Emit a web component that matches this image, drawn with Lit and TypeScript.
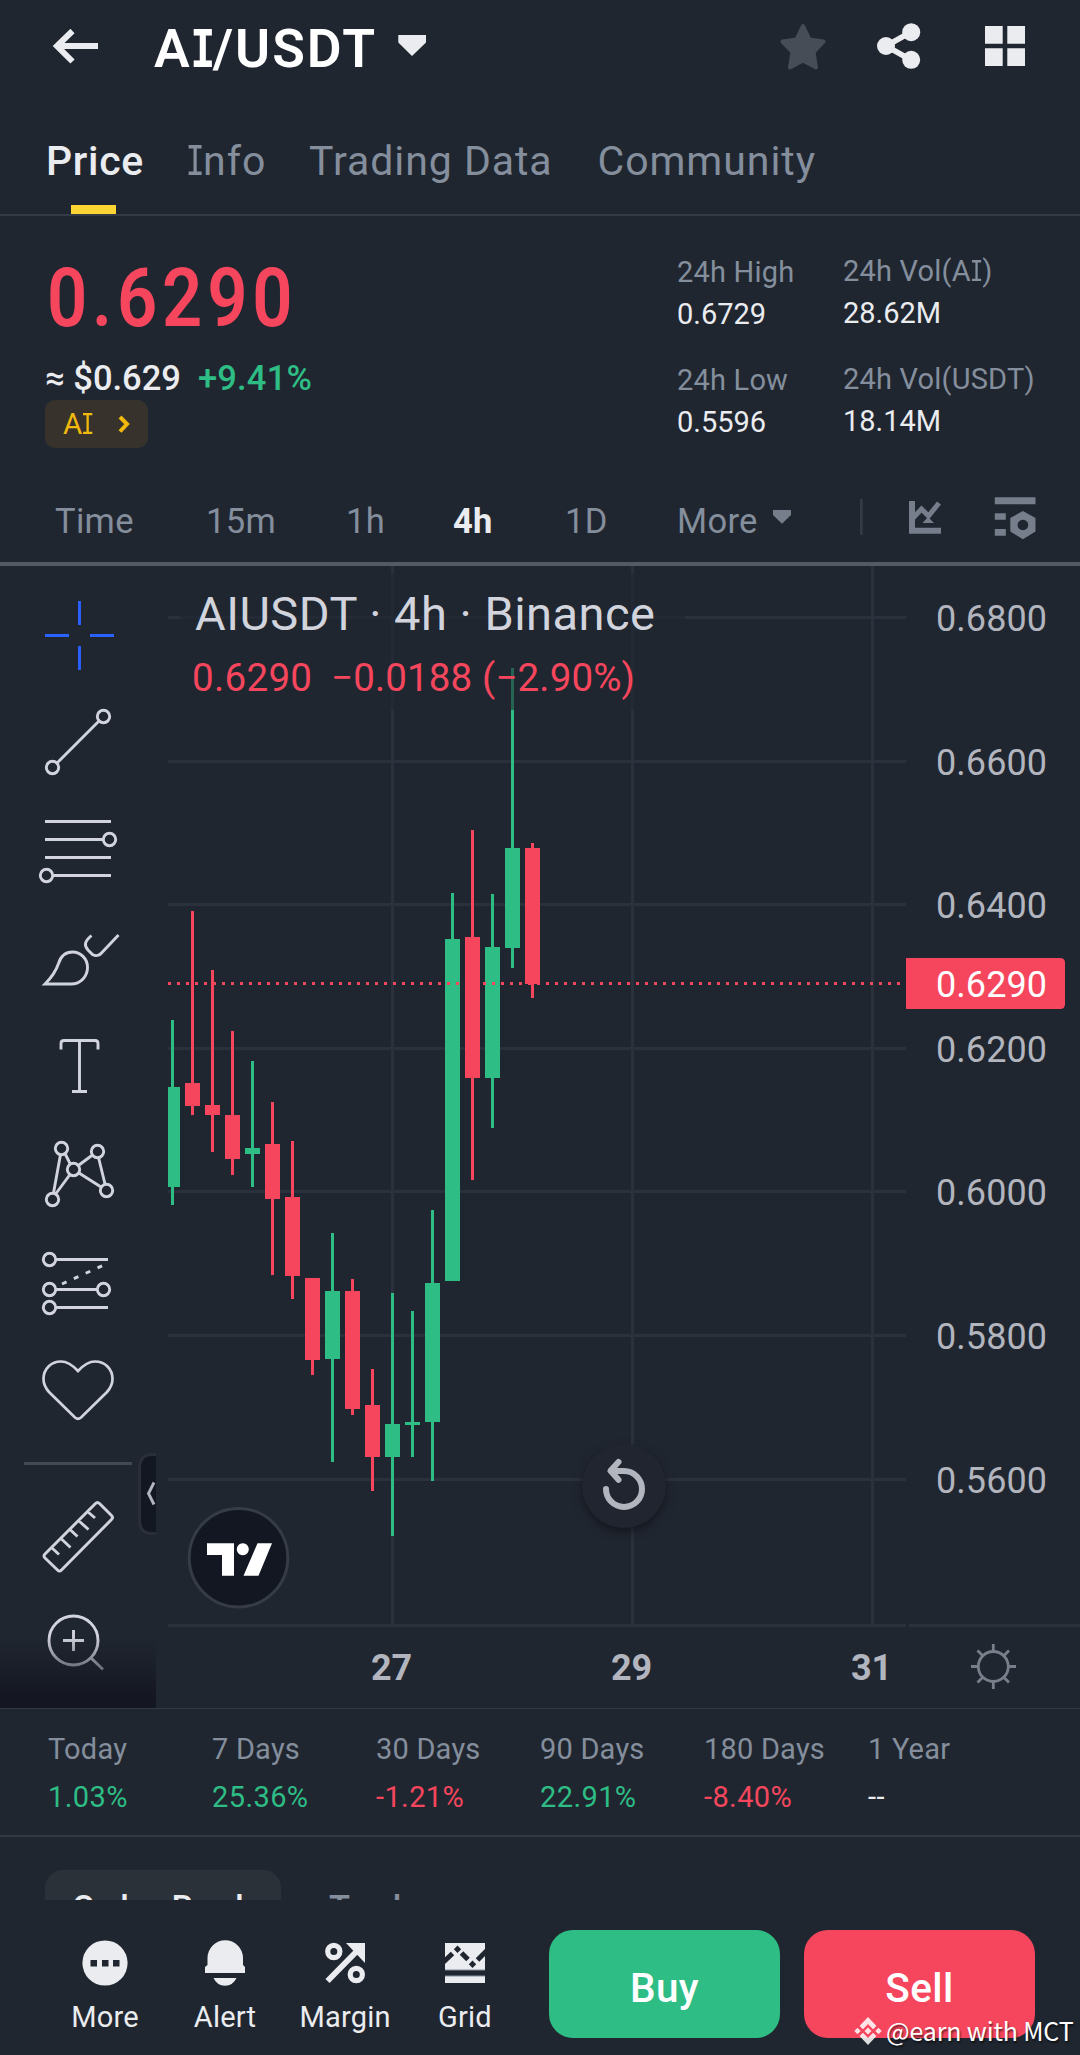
import { LitElement, html, svg, css, type SVGTemplateResult } from "lit";
import { customElement } from "lit/decorators.js";
import { classMap } from "lit/directives/class-map.js";

/** An SVG whose user units are page pixels: the viewBox names the region it covers. */
const region = (x: number, y: number, w: number, h: number, body: SVGTemplateResult, cls = "") =>
  html`<svg class="region ${cls}" width=${w} height=${h} viewBox="${x} ${y} ${w} ${h}">${body}</svg>`;

const slabI = html`<span class="slab">I</span>`;

// centre x, wick top, body top, body bottom, wick bottom, rising
type Candle = [number, number, number, number, number, boolean];
const candles: Candle[] = [
  [172.5, 1020, 1087, 1187, 1205, true],
  [192.5, 911, 1083, 1106, 1115, false],
  [212.5, 970, 1105, 1115, 1152, false],
  [232.5, 1031, 1115, 1159, 1175, false],
  [252.5, 1061, 1148, 1154, 1187, true],
  [272.5, 1102, 1144, 1199, 1275, false],
  [292.5, 1141, 1197, 1276, 1299, false],
  [312.5, 1278, 1278, 1360, 1375, false],
  [332.5, 1233, 1291, 1359, 1462, true],
  [352.5, 1279, 1291, 1409, 1415, false],
  [372.5, 1369, 1405, 1457, 1491, false],
  [392.5, 1293, 1424, 1457, 1536, true],
  [412.5, 1311, 1422, 1425, 1457, true],
  [432.5, 1210, 1283, 1422, 1481, true],
  [452.5, 893, 939, 1281, 1281, true],
  [472.5, 830, 937, 1078, 1180, false],
  [492.5, 894, 947, 1078, 1128, true],
  [512.5, 668, 848, 948, 968, true],
  [532.5, 843, 848, 984, 998, false],
];

const levels: [string, number][] = [
  ["0.6800", 616], ["0.6600", 760], ["0.6400", 903], ["0.6200", 1047],
  ["0.6000", 1190], ["0.5800", 1334], ["0.5600", 1478],
];
const dates: [string, number][] = [["27", 391], ["29", 631], ["31", 871]];

const tools: SVGTemplateResult[] = [
  svg`<path stroke="#2962ff" d="M79.5 601v24M79.5 646v24M45 635.5h24M90 635.5h24"/>`,
  svg`<circle cx="103.5" cy="716.5" r="6.2"/><circle cx="52.5" cy="767.5" r="6.2"/><path d="M57 763L99 721"/>`,
  svg`<path d="M45 821.5h66M45 839.5h58M45 857.5h66M53 875.5h58"/><circle cx="109.5" cy="839.5" r="6.2"/><circle cx="46.5" cy="875.5" r="6.2"/>`,
  svg`<path d="M45 984H71C81 984 87.500 976 87.500 967.500C87.500 958.500 80.500 952 72.500 952C65 952 60.500 957 58.500 963.500C56 971 50 979 45 984Z"/><path d="M91.500 935.500C85 941 83.500 945 88 950L92.500 954.500C96 956.500 99.500 955.500 101.500 953L118.500 935"/>`,
  svg`<path d="M61 1049.500v-6q0-3 3-3h31q3 0 3 3v6M79.500 1041v50.500M72 1091.500h15"/>`,
  svg`<path d="M60.500 1154.500L53.500 1193M65 1153.500L70 1163.500M79 1165L92.500 1155M98.500 1157.500L105 1184M79 1173L101 1187M70 1174.500L56 1193.500"/><circle cx="61.500" cy="1148.500" r="6.200"/><circle cx="97.500" cy="1151.500" r="6.200"/><circle cx="73.500" cy="1169.500" r="6.200"/><circle cx="106.500" cy="1190.500" r="6.200"/><circle cx="52.500" cy="1199.500" r="6.200"/>`,
  svg`<path d="M56 1259.500h52M56 1289.500h41M56 1307.500h52"/><path stroke-dasharray="5 8" d="M62 1284L104 1265"/><circle cx="49.500" cy="1259.500" r="6.200"/><circle cx="49.500" cy="1289.500" r="6.200"/><circle cx="103.500" cy="1289.500" r="6.200"/><circle cx="49.500" cy="1307.500" r="6.200"/>`,
  svg`<path stroke-width="2.700" d="M78 1371C72 1364.500 67 1361.500 61 1361.500C51 1361.500 43.500 1369 43.500 1379C43.500 1384 45.500 1388 49 1392L75 1417.500Q78 1420 81 1417.500L107 1392C110.500 1388 112.500 1384 112.500 1379C112.500 1369 105 1361.500 95 1361.500C89 1361.500 84 1364.500 78 1371Z"/>`,
];

const performance: [string, string, string][] = [
  ["Today", "1.03%", "up"], ["7 Days", "25.36%", "up"], ["30 Days", "-1.21%", "down"],
  ["90 Days", "22.91%", "up"], ["180 Days", "-8.40%", "down"], ["1 Year", "--", ""],
];

const navItems: [string, SVGTemplateResult][] = [
  ["More", svg`<circle cx="105" cy="1963" r="22.600" fill="#eaecef"/><path fill="#202630" d="M90.500 1960h6.500v6.500h-6.500zM102 1960h6.500v6.500h-6.500zM113 1960h6.500v6.500h-6.500z"/>`],
  ["Alert", svg`<path fill="#eaecef" d="M207.500 1958a17.500 17.500 0 0 1 35.500 0v7l2 2v6h-40v-6l2.500-2zM213.500 1978h23q-3.500 7.700-11.500 7.700t-11.500-7.700z"/>`],
  ["Margin", svg`<g fill="none" stroke="#eaecef"><circle cx="333.800" cy="1951.500" r="6.100" stroke-width="5.200"/><circle cx="356.300" cy="1974.500" r="6.100" stroke-width="5.200"/><path stroke-width="5.800" d="M327.500 1981L358 1950"/></g><path fill="#eaecef" d="M346 1943h19v20z"/>`],
  ["Grid", svg`<path fill="#eaecef" d="M445 1943h40v27h-40zM445 1976h40v7h-40z"/><path stroke="#202630" stroke-width="5" d="M443 1962.500L452.500 1953.500M461.500 1953L468 1959.500M477.500 1960L487 1950.500"/><path fill="#202630" d="M457.500 1945.500l3.700 3.700-3.700 3.700-3.700-3.700zM472.500 1960.500l3.700 3.700-3.700 3.700-3.700-3.700z"/><path fill="#848e9c" d="M445 1969.500h40v1h-40zM445 1975.500h40v1h-40z"/>`],
];

@customElement("app-root")
export class AppRoot extends LitElement {
  static styles = css`
    :host {
      display: block;
      position: relative;
      width: 1080px;
      height: 2055px;
      overflow: hidden;
      background: #202630;
      color: #eaecef;
      font-family: Roboto, "Liberation Sans", sans-serif;
      white-space: nowrap;
    }
    .region { display: block; flex: none; }
    .slab {
      display: inline-block;
      font-family: "DejaVu Sans Mono", monospace;
      font-size: 0.975em;
      line-height: 1;
      letter-spacing: 0;
      transform: scaleX(0.8);
      margin: 0 -0.1em;
    }
    .up { color: #2ebd85; }
    .down { color: #f6465d; }

    .header { display: flex; height: 92px; padding-right: 45px; }
    .title { width: 244px; margin: 0; font-size: 53.5px; line-height: 97px; font-weight: 600; color: #fff; letter-spacing: 2px; }
    .spacer { flex: 1; }
    .actions { display: flex; }

    .tabs {
      display: grid;
      grid-template-columns: 141px 122px 288.5px auto;
      grid-template-rows: 122px;
      height: 122px;
      padding-left: 46px;
      border-bottom: 2px solid #333a46;
      font-size: 41px;
      font-weight: 450;
      line-height: 138px;
      letter-spacing: 0.95px;
      color: #848e9c;
    }
    .tab { position: relative; height: 122px; }
    .tab.active { color: #eaecef; font-weight: 500; letter-spacing: 0.7px; }
    .tab.active::after { content: ""; position: absolute; left: 25px; bottom: 0; width: 45px; height: 9px; background: #fcd535; }

    .ticker { display: flex; height: 253px; }
    .quote { width: 632px; padding: 50px 0 0 45px; }
    .last { width: 290px; margin-left: 2px; font-size: 82px; line-height: 64px; font-weight: 600; letter-spacing: 5.6px; transform: scaleX(0.86); transform-origin: left; }
    .fiat { display: flex; gap: 17px; margin-top: 27px; font-size: 34.5px; line-height: 42px; font-weight: 500; }
    .fiat .up { letter-spacing: 0.2px; }
    .tag { display: flex; width: 103px; height: 48px; margin-top: 1px; border-radius: 10px; background: #37332c; color: #f0b90b; font-size: 29.5px; line-height: 49px; }
    .tag-name { width: 67px; padding-left: 18px; box-sizing: border-box; }
    .stats { display: grid; grid-template-columns: 166px auto; }
    .stat-col { padding-top: 35px; display: flex; flex-direction: column; gap: 24px; }
    .stat-col + .stat-col { padding-top: 34px; }
    .label { font-size: 29px; line-height: 42px; letter-spacing: 0.2px; color: #848e9c; }
    .value { font-size: 29px; line-height: 42px; font-weight: 450; }

    .intervals {
      display: grid;
      grid-template-columns: 151px 140px 107px 112px 112px 88px 75px 45px 80px auto;
      height: 93px;
      padding-left: 55px;
      border-bottom: 4px solid #545962;
      font-size: 34.5px;
      line-height: 104px;
      letter-spacing: 0.3px;
      color: #848e9c;
    }
    .interval.active { color: #eaecef; font-weight: 700; }

    .chart { display: flex; height: 1142px; border-bottom: 1px solid #333a46; }
    .toolbar { position: relative; width: 156px; padding-top: 15px; box-sizing: border-box; overflow: hidden; }
    .tool { fill: none; stroke: #d1d4dc; stroke-width: 2.9; }
    .fade { position: absolute; inset: auto 0 0 0; height: 72px; background: linear-gradient(rgba(19, 23, 34, 0), #141722 85%); }
    .legend { font-size: 47px; fill: #d1d4dc; }
    .change { font-size: 38.5px; fill: #f6465d; }
    .axis { font-size: 36px; fill: #b2b5be; }
    .on-tag { fill: #fff; }
    .date { font-weight: 700; text-anchor: middle; }
    .shade { filter: drop-shadow(0 4px 5px rgba(10, 12, 18, 0.6)); }

    .performance { display: grid; grid-template-columns: repeat(6, 164px); height: 107px; padding: 19px 0 0 48px; border-bottom: 2px solid #333a46; }
    .performance .value { margin-top: 6px; font-weight: 400; letter-spacing: 0.4px; }

    .book { display: flex; height: 30px; padding: 33px 0 0 45px; overflow: hidden; font-size: 34.5px; line-height: 76px; font-weight: 500; letter-spacing: 0.9px; color: #848e9c; }
    .book-tab { width: 236px; height: 60px; margin-right: 48px; border-radius: 18px 18px 0 0; text-align: center; background: #2b3139; color: #eaecef; }

    .footer { display: flex; height: 155px; padding: 30px 0 0 45px; box-sizing: border-box; }
    .nav { width: 120px; text-align: center; }
    .nav .label { color: #eaecef; }
    .trade { width: 231px; height: 108px; margin-left: 24px; border-radius: 24px; text-align: center; color: #fff; font-size: 40.5px; line-height: 117px; font-weight: 500; letter-spacing: 0.4px; }
    .buy { background: #2ebd85; }
    .sell { background: #f6465d; }

    .mark { position: absolute; left: 852px; top: 2009.5px; display: flex; font: 400 25px/40px "Noto Sans CJK SC", sans-serif; letter-spacing: -0.15px; color: #fff; text-shadow: 1px 2px 2px rgba(0, 0, 0, 0.6); }
  `;

  private header() {
    return html`
      <header class="header">
        ${region(0, 0, 154, 92, svg`<path fill="none" stroke="#eaecef" stroke-width="6" d="M98 46H57M72.500 31L57 46L72.500 61.500"/>`)}
        <h1 class="title">A${slabI}/USDT</h1>
        ${region(398, 0, 40, 92, svg`<path fill="#eaecef" d="M398.300 35h27.700v7.500L412 56L398.300 42.500z"/>`)}
        <span class="spacer"></span>
        <div class="actions">
          ${region(770, 0, 95, 92, svg`<path fill="#474d57" stroke="#474d57" stroke-width="4" stroke-linejoin="round" d="M803 26L809.500 39.500L823.500 41.500L813.500 52L816 67.500L803 60.500L790 67.500L792.500 52L782.500 41.500L796.500 39.500Z"/>`)}
          ${region(865, 0, 95, 92, svg`<g fill="#eaecef"><circle cx="886" cy="46" r="9"/><circle cx="911.200" cy="32.200" r="9"/><circle cx="911.200" cy="59.800" r="9"/></g><path fill="none" stroke="#eaecef" stroke-width="5.500" d="M911 32L886 46L911 60"/>`)}
          ${region(960, 0, 75, 92, svg`<path fill="#eaecef" d="M985 26h17.700v17.700H985zM1007.300 26H1025v17.700h-17.700zM985 48.300h17.700V66H985zM1007.300 48.300H1025V66h-17.700z"/>`)}
        </div>
      </header>
      <nav class="tabs">
        <span class="tab active">Price</span><span class="tab">${slabI}nfo</span>
        <span class="tab">Trading Data</span><span class="tab">Community</span>
      </nav>`;
  }

  private stat(label: unknown, value: string) {
    return html`<div><div class="label">${label}</div><div class="value">${value}</div></div>`;
  }

  private ticker() {
    return html`
      <section class="ticker">
        <div class="quote">
          <div class="last down">0.6290</div>
          <div class="fiat"><span>≈ $0.629</span><span class="up">+9.41%</span></div>
          <div class="tag">
            <span class="tag-name">A${slabI}</span>
            ${region(112, 400, 36, 48, svg`<path fill="none" stroke="#f0b90b" stroke-width="4" d="M120 417l7 7-7 7.500"/>`)}
          </div>
        </div>
        <div class="stats">
          <div class="stat-col">${this.stat("24h High", "0.6729")}${this.stat("24h Low", "0.5596")}</div>
          <div class="stat-col">${this.stat(html`24h Vol(A${slabI})`, "28.62M")}${this.stat("24h Vol(USDT)", "18.14M")}</div>
        </div>
      </section>
      <div class="intervals">
        ${["Time", "15m", "1h", "4h", "1D", "More"].map(
          (t) => html`<span class=${classMap({ interval: true, active: t === "4h" })}>${t}</span>`,
        )}
        ${region(765, 469, 75, 93, svg`<path fill="#767e8b" d="M773 510h18v5l-9 8.700l-9-8.700z"/>`)}
        ${region(840, 469, 45, 93, svg`<path fill="#333b47" d="M860 499h2.700v36H860z"/>`)}
        ${region(885, 469, 80, 93, svg`<g fill="none" stroke="#767e8b"><path stroke-width="6" d="M912 501v29.800h29"/><path stroke-width="5" d="M913 518L921.500 509L928.500 516L939 503"/></g><path fill="#767e8b" d="M922.500 523l5.500-6 6 6z"/>`)}
        ${region(965, 469, 115, 93, svg`<path fill="#767e8b" fill-rule="evenodd" d="M994.800 497.300h40.700v7h-40.700zM994.800 513.300h11v6.500h-11zM994.800 529h11v6.700h-11zM1022.900 511l12.600 7v13.500l-12.600 7.800l-12.600-7.800V518zM1022.900 519.700a5.300 5.300 0 1 0 .01 0z"/>`)}
      </div>`;
  }

  private toolbar() {
    return html`
      <div class="toolbar">
        ${tools.map((t, i) => region(0, 581 + i * 108, 156, 108, t, "tool"))}
        ${region(0, 1445, 156, 263, svg`
          <path stroke="#434852" d="M24 1463.500h108"/>
          <path fill="#131722" stroke="#2a2e39" d="M160 1454.500h-8q-12.500 0-12.500 14v51q0 14 12.500 14h8z"/>
          <path stroke="#b2b5be" d="M154 1482.500l-5.500 11 5.500 11"/>
          <path d="M95.500 1503.500q2-2 4 0l12 12q2 2 0 4L61.500 1570q-2 2-4 0l-12.500-12q-2-2 0-4zM52 1548l7 6.500M61.500 1539l9 8.500M70.500 1530l7 6.500M79 1521l9.500 8.500M88 1512l7 6"/>
          <circle cx="73.500" cy="1640.500" r="24.500"/><path d="M63 1640.500h21M73.500 1630v21M91 1658l12 11.500"/>`, "tool")}
        <div class="fade"></div>
      </div>`;
  }

  private plot() {
    return region(156, 566, 924, 1142, svg`
      <clipPath id="pane"><rect x="168" y="566" width="738" height="1058"/></clipPath>
      <g fill="#2b313c">
        ${dates.map(([, x]) => svg`<rect x=${x} y="566" width="3" height="1058"/>`)}
        ${levels.map(([, y]) => svg`<rect x="168" y=${y} width="738" height="3"/>`)}
        <rect x="168" y="1624" width="738" height="3"/><rect x="909" y="1624" width="171" height="3"/>
      </g>
      <g clip-path="url(#pane)">
        ${candles.map(([x, t, bt, bb, b, rising]) => svg`<path fill=${rising ? "#2ebd85" : "#f6465d"}
          d="M${x - 1.5} ${t}h3V${b}h-3zM${x - 7.5} ${bt}h15V${bb}h-15z"/>`)}
      </g>
      <path stroke="#f6465d" stroke-width="3" stroke-dasharray="3 6" d="M168 983.500H906"/>
      <rect x="180" y="574" width="505" height="136" fill="#202630" opacity="0.6"/>
      <text class="legend" x="195" y="629.500" textLength="460">AIUSDT · 4h · Binance</text>
      <text class="change" x="192" y="691" textLength="120">0.6290</text>
      <text class="change" x="331" y="691" textLength="304">−0.0188 (−2.90%)</text>
      ${levels.map(([label, y]) => svg`<text class="axis" x="936" y=${y + 14.800} textLength="111">${label}</text>`)}
      <path fill="#f6465d" d="M906 958h154q5 0 5 5v41q0 5-5 5H906z"/>
      <text class="axis on-tag" x="936" y="997" textLength="111">0.6290</text>
      ${dates.map(([label, x]) => svg`<text class="axis date" x=${x + 0.6} y="1680">${label}</text>`)}
      <g fill="none" stroke="#787f8b" stroke-width="2.800">
        <circle cx="993.300" cy="1666.500" r="15"/>
        <path d="M993.300 1644v7M993.300 1682v7M971 1666.500h7M1009 1666.500h7M977.500 1650.500l5 5M1009 1650.500l-5 5M977.500 1682.500l5-5M1009 1682.500l-5-5"/>
      </g>
      <circle cx="238.500" cy="1557.700" r="49.300" fill="#131722" stroke="#363c47" stroke-width="3"/>
      <path fill="#fff" d="M207 1543.300h27v32.500h-12V1555h-15zM257.500 1543.300h14.500L258.500 1575.800h-15zM242.800 1543.300a6 6 0 1 0 .01 0z"/>
      <circle class="shade" cx="624" cy="1486" r="42" fill="#21252f"/>
      <path fill="none" stroke="#b2b5be" stroke-width="6" stroke-linecap="round" stroke-linejoin="round"
        d="M606 1489a18 18 0 1 0 18-18H611M618.500 1462l-8 8.700l8 9"/>`);
  }

  render() {
    return html`
      ${this.header()} ${this.ticker()}
      <section class="chart">${this.toolbar()}${this.plot()}</section>
      <section class="performance">
        ${performance.map(([label, value, tone]) => html`<div><div class="label">${label}</div><div class="value ${tone}">${value}</div></div>`)}
      </section>
      <section class="book"><span class="book-tab">Order Book</span><span>Trades</span></section>
      <footer class="footer">
        ${navItems.map(([label, icon], i) => html`<div class="nav">${region(45 + i * 120, 1930, 120, 66, icon)}<div class="label">${label}</div></div>`)}
        <div class="trade buy">Buy</div><div class="trade sell">Sell</div>
      </footer>
      <div class="mark">
        ${region(852, 2010, 34, 42, svg`<g fill="#fff" fill-opacity="0.85"><path d="M868 2017l8.500 9-3.500 3.300-5-5.300-5 5.300-3.500-3.300zM868 2045l-8.500-9 3.500-3.300 5 5.300 5-5.300 3.500 3.300zM868 2027.500l3.500 3.500-3.500 3.500-3.500-3.500zM857.500 2027.800l3.200 3.200-3.200 3.200-3.200-3.200zM878.500 2027.800l3.200 3.200-3.200 3.200-3.200-3.200z"/></g>`)}
        <span>@earn with MCT</span>
      </div>`;
  }
}
